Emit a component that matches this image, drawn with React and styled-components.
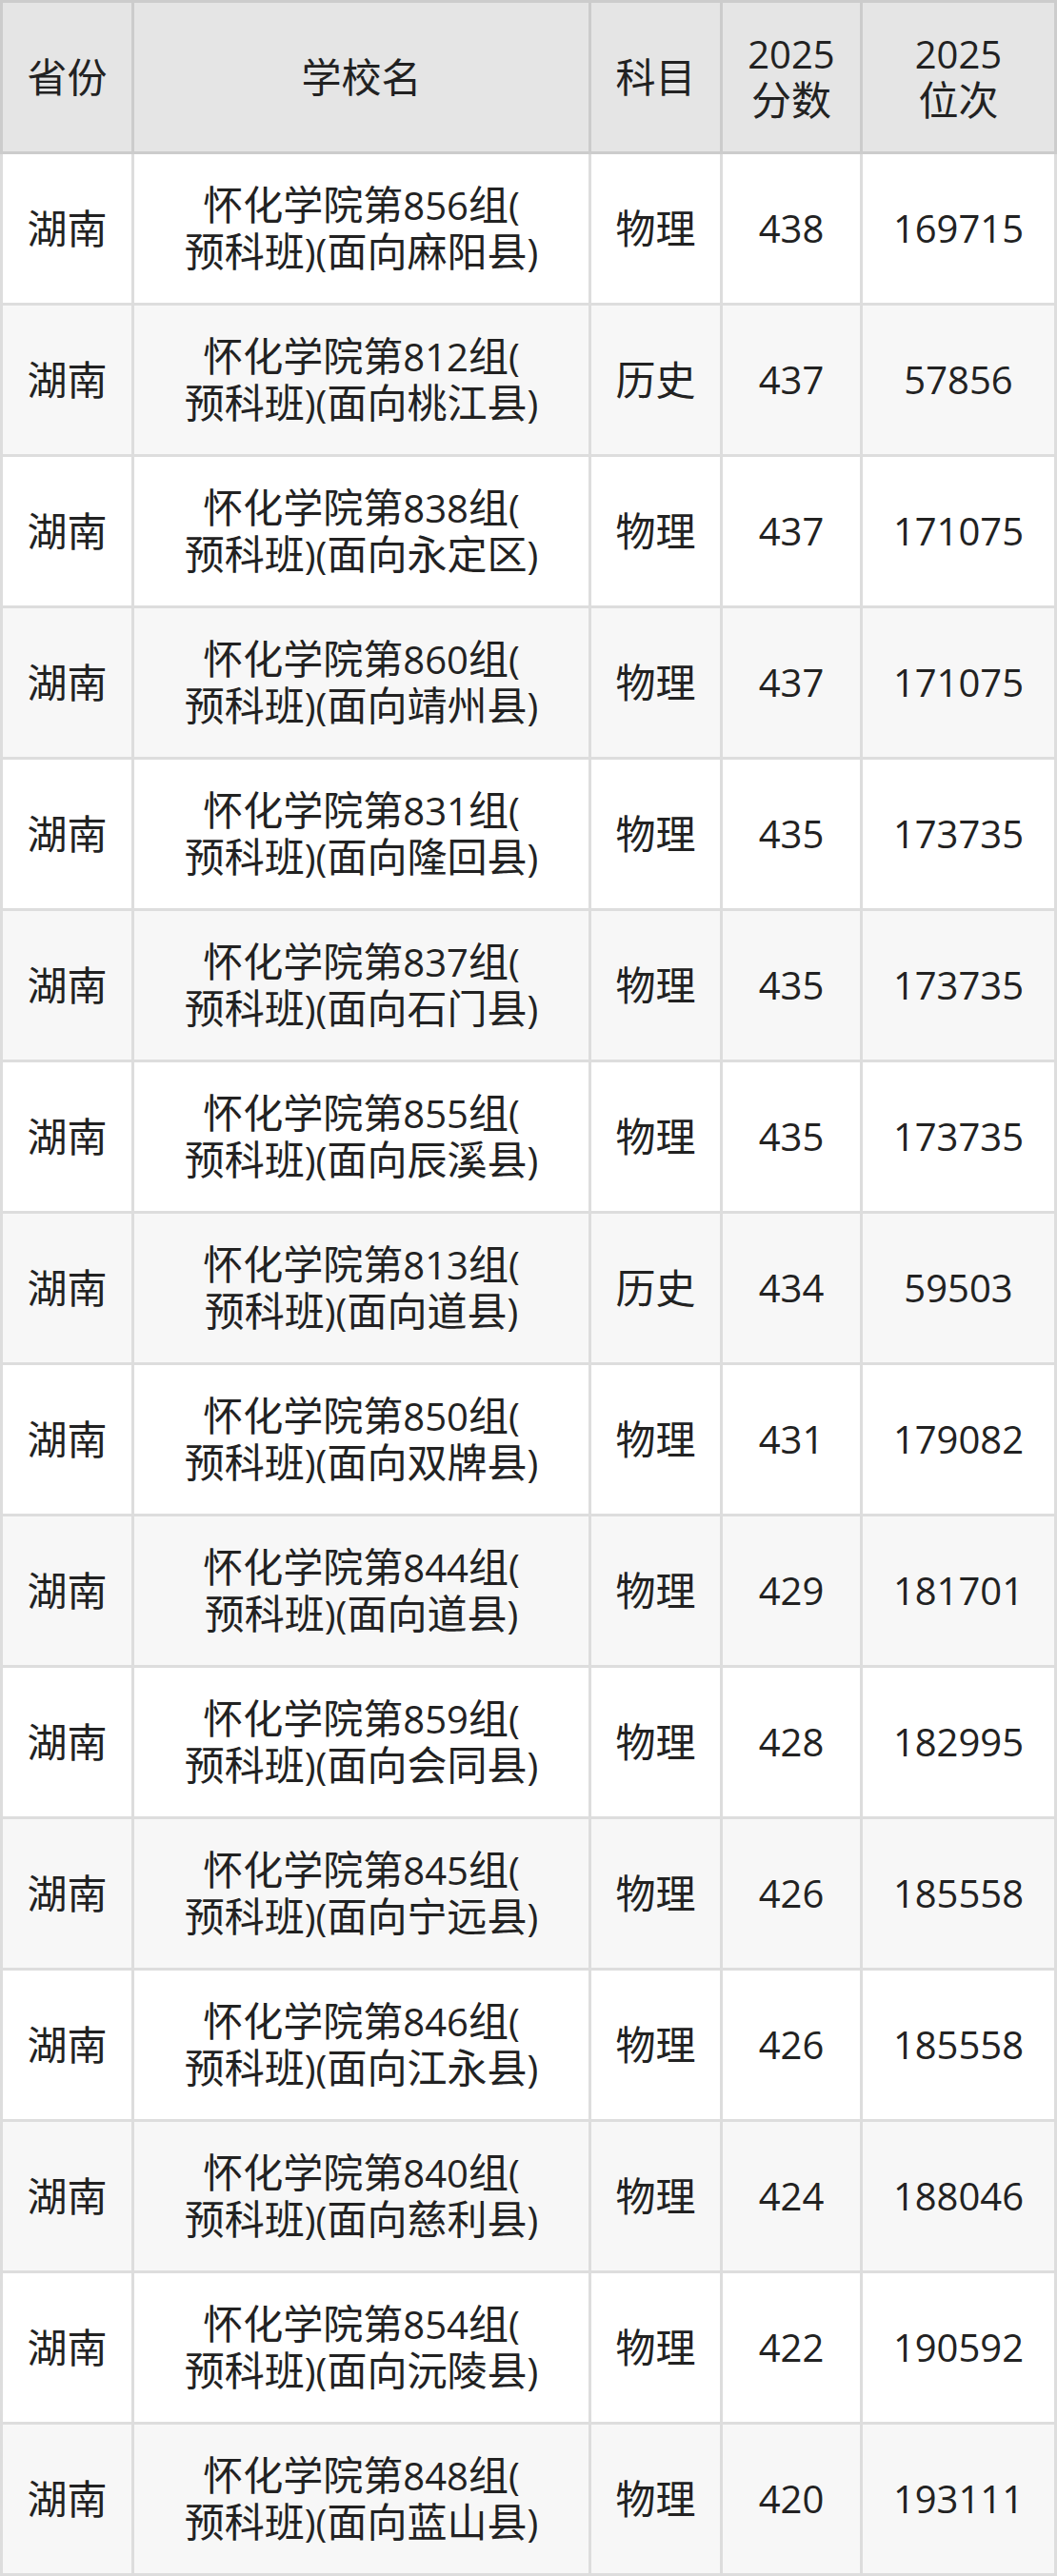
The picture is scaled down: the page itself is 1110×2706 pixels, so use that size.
import React from 'react'
import styled, { createGlobalStyle } from 'styled-components'

const GlobalStyle = createGlobalStyle`
  html, body {
    margin: 0;
    padding: 0;
    background: #ffffff;
  }
  body {
    font-family: "Open Sans", "Noto Sans CJK SC", sans-serif;
    color: #222222;
  }
`

const rows = [
  ['856', '麻阳县', '物理', '438', '169715'],
  ['812', '桃江县', '历史', '437', '57856'],
  ['838', '永定区', '物理', '437', '171075'],
  ['860', '靖州县', '物理', '437', '171075'],
  ['831', '隆回县', '物理', '435', '173735'],
  ['837', '石门县', '物理', '435', '173735'],
  ['855', '辰溪县', '物理', '435', '173735'],
  ['813', '道县', '历史', '434', '59503'],
  ['850', '双牌县', '物理', '431', '179082'],
  ['844', '道县', '物理', '429', '181701'],
  ['859', '会同县', '物理', '428', '182995'],
  ['845', '宁远县', '物理', '426', '185558'],
  ['846', '江永县', '物理', '426', '185558'],
  ['840', '慈利县', '物理', '424', '188046'],
  ['854', '沅陵县', '物理', '422', '190592'],
  ['848', '蓝山县', '物理', '420', '193111'],
]

// CJK glyphs sit a touch larger than the latin digits in the source
const Text = ({ children }) =>
  children
    .split(/([\u4e00-\u9fff]+)/)
    .filter(Boolean)
    .map((part, i) =>
      /[\u4e00-\u9fff]/.test(part) ? <Han key={i}>{part}</Han> : <span key={i}>{part}</span>
    )

function App() {
  return (
    <>
      <GlobalStyle />
      <Table>
        <Row $head>
          <Cell $head><span><Text>省份</Text></span></Cell>
          <Cell $head><span><Text>学校名</Text></span></Cell>
          <Cell $head><span><Text>科目</Text></span></Cell>
          <Cell $head><span>2025<br /><Text>分数</Text></span></Cell>
          <Cell $head><span>2025<br /><Text>位次</Text></span></Cell>
        </Row>
        {rows.map((r, i) => (
          <Row key={i}>
            <Cell $alt={i % 2 === 1}><span><Text>湖南</Text></span></Cell>
            <Cell $alt={i % 2 === 1}>
              <span>
                <Text>{`怀化学院第${r[0]}组(`}</Text>
                <br />
                <Text>{`预科班)(面向${r[1]})`}</Text>
              </span>
            </Cell>
            <Cell $alt={i % 2 === 1}><span><Text>{r[2]}</Text></span></Cell>
            <Cell $alt={i % 2 === 1}>{r[3]}</Cell>
            <Cell $alt={i % 2 === 1}>{r[4]}</Cell>
          </Row>
        ))}
      </Table>
    </>
  )
}

export default App

const Table = styled.div`
  width: 1110px;
  display: flex;
  flex-direction: column;
`

const Row = styled.div`
  display: grid;
  grid-template-columns: 135px 477px 135px 144px 201px;
  column-gap: 3px;
  padding: ${p => (p.$head ? '3px' : '0 3px 3px 3px')};
  background: ${p => (p.$head ? '#cccccc' : '#dddddd')};
`

const Cell = styled.div`
  height: 156px;
  display: flex;
  align-items: center;
  justify-content: center;
  text-align: center;
  font-size: 40px;
  line-height: 48px;
  background: ${p => (p.$head ? '#e5e5e5' : p.$alt ? '#f7f7f7' : '#ffffff')};
`

const Han = styled.span`
  font-size: 42px;
`
